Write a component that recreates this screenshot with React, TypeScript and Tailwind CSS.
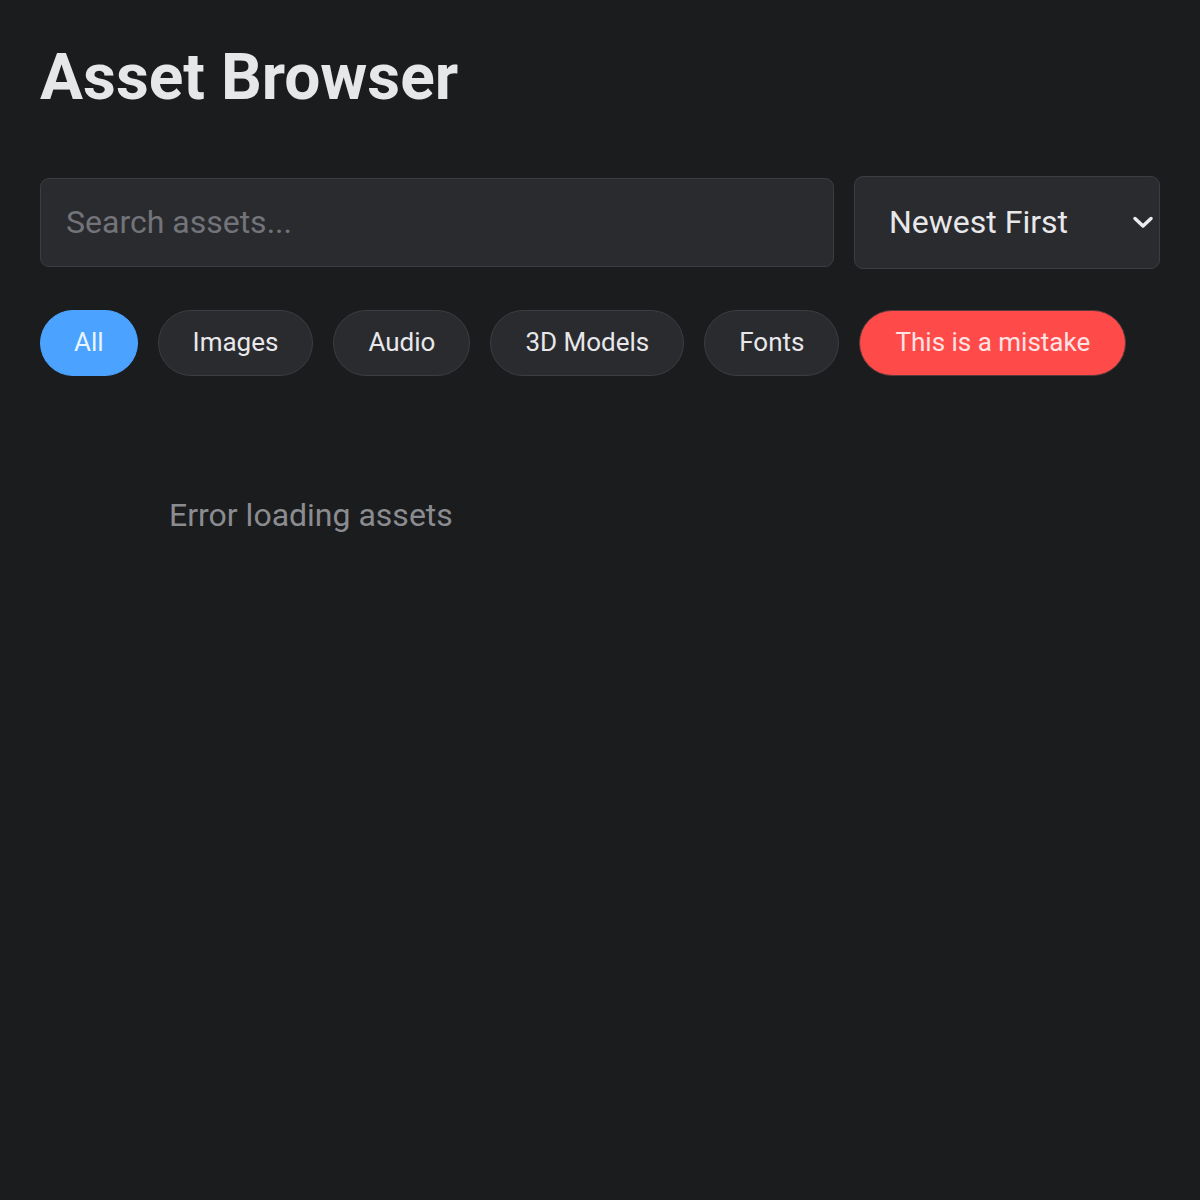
import { useState } from "react";

const FILTERS = ["All", "Images", "Audio", "3D Models", "Fonts"];

export default function App() {
  const [active, setActive] = useState("All");
  const [sort, setSort] = useState("newest");

  return (
    <div className="min-h-[1200px] w-full bg-[#1b1c1e] px-10 pt-10 font-['Roboto',sans-serif] text-[#e8e8ea]">
      <h1 className="text-[64px] font-bold leading-[1.2] text-[#e6e7e9]">
        Asset Browser
      </h1>

      {/* Search + sort */}
      <div className="mt-[59px] flex items-center gap-5">
        <input
          type="text"
          placeholder="Search assets..."
          className="h-[89px] flex-1 rounded-[9px] border border-[#3c3d42] bg-[#2a2b2f] px-[25px] text-[32px] text-[#e8e8ea] outline-none placeholder:text-[#737479]"
        />
        <div className="relative w-[306px]">
          <select
            value={sort}
            onChange={(e) => setSort(e.target.value)}
            className="h-[93px] w-full appearance-none rounded-[9px] border border-[#3c3d42] bg-[#2a2b2f] pl-[34px] pr-12 text-[32px] text-[#e8e8ea] outline-none"
          >
            <option value="newest">Newest First</option>
            <option value="oldest">Oldest First</option>
            <option value="name">Name</option>
          </select>
          <svg
            className="pointer-events-none absolute right-[6px] top-1/2 h-[14px] w-[22px] -translate-y-1/2"
            viewBox="0 0 22 14"
            fill="none"
          >
            <path
              d="M3 3.5l8 7.5 8-7.5"
              stroke="#ececee"
              strokeWidth="3.5"
              strokeLinecap="round"
              strokeLinejoin="round"
            />
          </svg>
        </div>
      </div>

      {/* Filter chips */}
      <div className="mt-[41px] flex flex-wrap items-center gap-5">
        {FILTERS.map((f) => (
          <button
            key={f}
            type="button"
            onClick={() => setActive(f)}
            className={
              f === active
                ? "h-[66px] rounded-full border border-[#4ba3ff] bg-[#4ba3ff] px-[33px] text-[26px] text-[#eaf4ff]"
                : "h-[66px] rounded-full border border-[#3c3d42] bg-[#2a2b2f] px-[34px] text-[26px] text-[#e8e8ea]"
            }
          >
            {f}
          </button>
        ))}
        <button
          type="button"
          className="h-[66px] rounded-full border border-[#5a3a3c] bg-[#ff4a4a] px-[35px] text-[26px] text-[#fde4e4]"
        >
          This is a mistake
        </button>
      </div>

      <p className="mt-[115px] pl-[129px] text-[32px] leading-[1.5] text-[#8b8c90]">
        Error loading assets
      </p>
    </div>
  );
}
